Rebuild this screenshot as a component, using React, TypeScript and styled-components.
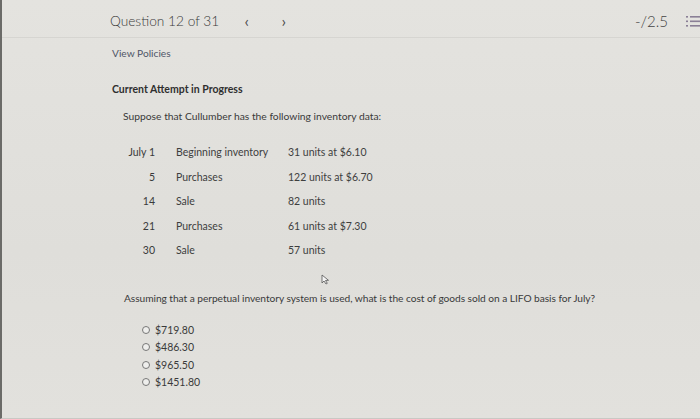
import React from "react";
import styled, { createGlobalStyle } from "styled-components";

const GlobalStyle = createGlobalStyle`
    html, body {
        margin: 0;
        padding: 0;
        background: #e1e0dc;
    }
    body {
        font-family: Lato, "Liberation Sans", sans-serif;
        color: #3b3b3b;
    }
`;

type TRow = {
    day: string;
    label: string;
    detail: string;
};

const rows: TRow[] = [
    { day: "July 1", label: "Beginning inventory", detail: "31 units at $6.10" },
    { day: "5", label: "Purchases", detail: "122 units at $6.70" },
    { day: "14", label: "Sale", detail: "82 units" },
    { day: "21", label: "Purchases", detail: "61 units at $7.30" },
    { day: "30", label: "Sale", detail: "57 units" },
];

const choices = ["$719.80", "$486.30", "$965.50", "$1451.80"];

const App = () => {
    return (
        <>
            <GlobalStyle />
            <Page>
                <Header>
                    <Title>Question 12 of 31</Title>
                    <NavArrow>&lsaquo;</NavArrow>
                    <NavArrow>&rsaquo;</NavArrow>
                    <Spacer />
                    <Score>-/2.5</Score>
                    <ListIcon width="14" height="13" viewBox="0 0 14 13">
                        <rect x="0" y="1" width="2" height="1.6" fill="#8a7f96" />
                        <rect x="0" y="5.5" width="2" height="1.6" fill="#8a7f96" />
                        <rect x="0" y="10" width="2" height="1.6" fill="#8a7f96" />
                        <rect x="4" y="1" width="10" height="1.6" fill="#8a7f96" />
                        <rect x="4" y="5.5" width="10" height="1.6" fill="#8a7f96" />
                        <rect x="4" y="10" width="10" height="1.6" fill="#8a7f96" />
                    </ListIcon>
                </Header>
                <Body>
                    <PolicyLink>View Policies</PolicyLink>
                    <Attempt>Current Attempt in Progress</Attempt>
                    <Question>
                        <Prompt>Suppose that Cullumber has the following inventory data:</Prompt>
                        <Table>
                            {rows.map((r) => (
                                <React.Fragment key={r.day}>
                                    <Day>{r.day}</Day>
                                    <Cell>{r.label}</Cell>
                                    <Cell>{r.detail}</Cell>
                                </React.Fragment>
                            ))}
                        </Table>
                        <CursorRow>
                            <svg width="9" height="11" viewBox="0 0 9 11">
                                <path d="M1 1 L1 9 L3 7 L5 10 L6.3 9.3 L4.5 6.5 L7.5 6.3 Z" fill="#f4f4f4" stroke="#555" strokeWidth="0.8" />
                            </svg>
                        </CursorRow>
                        <Ask>
                            Assuming that a perpetual inventory system is used, what is the cost of goods sold on a LIFO basis for July?
                        </Ask>
                        <Choices>
                            {choices.map((c) => (
                                <Choice key={c}>
                                    <Radio />
                                    {c}
                                </Choice>
                            ))}
                        </Choices>
                    </Question>
                </Body>
            </Page>
        </>
    );
};

export default App;

const Page = styled.div`
    width: 700px;
    height: 419px;
    box-sizing: border-box;
    border-left: 2px solid #6b6b68;
    border-bottom: 1px solid #c9c8c4;
    background: linear-gradient(180deg, #e4e3df 0%, #dfdeda 60%, #e2e1dd 100%);
    overflow: hidden;
`;

const Header = styled.div`
    display: flex;
    align-items: center;
    height: 38px;
    padding: 0 0 0 108px;
    border-bottom: 1px solid #d6d5d1;
    box-sizing: border-box;
`;

const Title = styled.div`
    font-size: 13.7px;
    font-weight: 300;
    color: #3a3a3a;
    margin-top: 4px;
    margin-right: 9px;
`;

const NavArrow = styled.div`
    font-size: 16px;
    color: #4a4a4a;
    width: 37px;
    text-align: center;
    margin-top: 3px;
`;

const Spacer = styled.div`
    flex: 1;
`;

const Score = styled.div`
    font-size: 15px;
    font-weight: 300;
    color: #444;
    margin-top: 4px;
    margin-right: 18px;
`;

const ListIcon = styled.svg`
    margin-top: 5px;
    margin-right: 0px;
`;

const Body = styled.div`
    padding: 9px 0 0 110px;
`;

const PolicyLink = styled.div`
    font-size: 10.2px;
    color: #4f5668;
    height: 13px;
`;

const Attempt = styled.div`
    font-size: 10.5px;
    font-weight: bold;
    color: #2f2f2f;
    margin-top: 23px;
`;

const Question = styled.div`
    padding-left: 11px;
    margin-top: 15px;
    font-size: 10.3px;
    color: #3a3a3a;
`;

const Prompt = styled.div`
    margin-bottom: 24px;
`;

const Table = styled.div`
    display: grid;
    grid-template-columns: 32px 133px auto;
    row-gap: 11.3px;
    font-size: 10.5px;
    line-height: 13.3px;
    & > div:nth-child(3n + 2) {
        padding-left: 21px;
    }
`;

const Day = styled.div`
    text-align: right;
`;

const Cell = styled.div`
    color: #3e3e3e;
`;

const CursorRow = styled.div`
    height: 34px;
    padding: 16px 0 0 198px;
    box-sizing: border-box;
`;

const Ask = styled.div`
    font-size: 10.2px;
    margin-left: 1px;
    letter-spacing: -0.05px;
`;

const Choices = styled.div`
    display: flex;
    flex-direction: column;
    gap: 4.3px;
    margin-top: 20px;
    padding-left: 19px;
`;

const Choice = styled.div`
    display: flex;
    align-items: center;
    font-size: 10.5px;
    height: 13px;
`;

const Radio = styled.span`
    width: 6px;
    height: 6px;
    border: 1px solid #777;
    border-radius: 50%;
    background: #eeeeec;
    margin-right: 5px;
`;
